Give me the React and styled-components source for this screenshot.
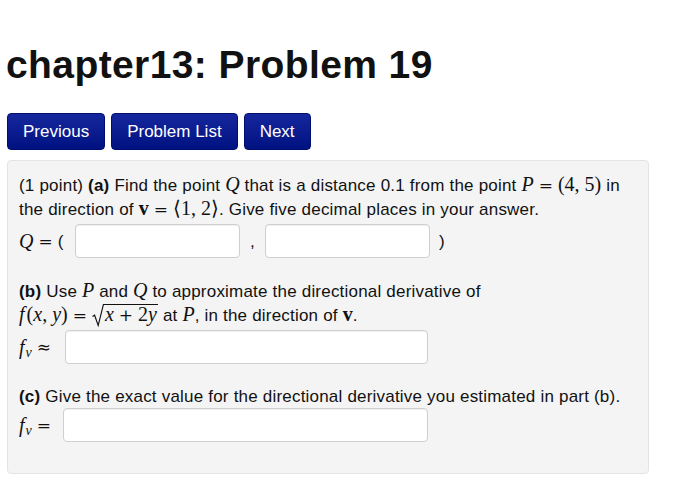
import React from 'react'
import styled, { createGlobalStyle } from 'styled-components'

const GlobalStyle = createGlobalStyle`
  body {
    margin: 0;
    background: #fff;
    font-family: "Liberation Sans", Arial, sans-serif;
    color: #111;
  }
`;

const Page = styled.div`
  padding: 42px 7px 0 7px;
`;

const Title = styled.h1`
  margin: 0 0 26px -1px;
  font-size: 39px;
  line-height: 45px;
  font-weight: bold;
  letter-spacing: 0.4px;
`;

const Nav = styled.div`
  display: flex;
  gap: 6px;
  margin-bottom: 10px;
`;

const NavButton = styled.button`
  height: 37px;
  padding: 0 15px;
  border: 1px solid #000f6e;
  border-radius: 4px;
  background: linear-gradient(#16279e, #001281);
  color: #fff;
  font-family: "Liberation Sans", Arial, sans-serif;
  font-size: 17px;
  cursor: pointer;
`;

const Panel = styled.div`
  width: 642px;
  box-sizing: border-box;
  padding: 12px 11px 31px 11px;
  background: #f4f4f4;
  border: 1px solid #e4e4e4;
  border-radius: 4px;
  font-size: 17px;
  line-height: 23px;
  letter-spacing: 0.2px;
`;

const Part = styled.div`
  margin-bottom: ${(p) => (p.last ? 0 : '21px')};
`;

const AnswerRow = styled.div`
  display: flex;
  align-items: center;
  margin-top: ${(p) => (p.tight ? 0 : '3px')};
`;

const Label = styled.span`
  width: ${(p) => p.width}px;
  flex: none;
  display: inline-flex;
  align-items: center;
  white-space: nowrap;
`;

const Input = styled.input`
  width: ${(p) => p.width}px;
  height: 34px;
  box-sizing: border-box;
  border: 1px solid #cfcfcf;
  border-radius: 4px;
  background: #fff;
  box-shadow: inset 0 1px 1px rgba(0, 0, 0, 0.06);
  padding: 4px 6px;
  font-size: 16px;
  flex: none;
`;

const Sep = styled.span`
  width: 25px;
  text-align: center;
  flex: none;
`;

const Close = styled.span`
  margin-left: 9px;
`;

const M = styled.span`
  font-family: "Liberation Serif", "Times New Roman", serif;
  font-size: 20px;
  letter-spacing: 0;
  font-style: ${(p) => (p.i ? 'italic' : 'normal')};
  font-weight: ${(p) => (p.b ? 'bold' : 'normal')};
  margin-right: ${(p) => (p.gap ? p.gap : 0)}px;
`;

const Op = styled.span`
  font-family: "DejaVu Serif", serif;
  font-size: 17px;
  line-height: 1;
  letter-spacing: 0;
  margin: 0 5px;
`;

const Sub = styled.sub`
  font-size: 14px;
  font-style: italic;
  vertical-align: -3px;
  line-height: 0;
  margin-left: 1px;
`;

const Radical = styled.span`
  position: relative;
  display: inline-block;
  padding-left: 12px;
  line-height: 18px;
  svg {
    position: absolute;
    left: 0;
    top: 0;
  }
`;

const Radicand = styled.span`
  display: inline-block;
  border-top: 1px solid #111;
  padding: 0 1px;
`;

const Fv = () => (
  <M i>f<Sub>v</Sub></M>
);

const Sqrt = ({ children }) => (
  <Radical>
    <svg width="13" height="23" viewBox="0 0 13 23">
      <path d="M0.5 12.5 L2.6 11.2 L6.2 21.5 L11.4 0.5 L13 0.5" fill="none" stroke="#111" strokeWidth="1.1" />
    </svg>
    <Radicand>{children}</Radicand>
  </Radical>
);

export default function App() {
  return (
    <Page>
      <GlobalStyle />
      <Title>chapter13: Problem 19</Title>
      <Nav>
        <NavButton>Previous</NavButton>
        <NavButton>Problem List</NavButton>
        <NavButton>Next</NavButton>
      </Nav>
      <Panel>
        <Part>
          (1 point) <b>(a)</b> Find the point <M i>Q</M> that is a distance 0.1 from the point{' '}
          <M i>P</M><Op>=</Op><M>(4, 5)</M> in
          <br />
          the direction of <M b>v</M><Op>=</Op><M>⟨1, 2⟩</M>. Give five decimal places in your answer.
          <AnswerRow>
            <Label width={56}>
              <M i>Q</M><Op>=</Op>(
            </Label>
            <Input width={165} />
            <Sep>,</Sep>
            <Input width={165} />
            <Close>)</Close>
          </AnswerRow>
        </Part>
        <Part>
          <b>(b)</b> Use <M i>P</M> and <M i>Q</M> to approximate the directional derivative of
          <br />
          <M i gap={2}>f</M><M>(</M><M i>x</M><M>, </M><M i>y</M><M>)</M><Op>=</Op>
          <Sqrt>
            <M i>x</M><Op>+</Op><M>2</M><M i>y</M>
          </Sqrt>{' '}
          at <M i>P</M>, in the direction of <M b>v</M>.
          <AnswerRow>
            <Label width={46}>
              <Fv /><Op>≈</Op>
            </Label>
            <Input width={363} />
          </AnswerRow>
        </Part>
        <Part last>
          <b>(c)</b> Give the exact value for the directional derivative you estimated in part (b).
          <AnswerRow tight>
            <Label width={44}>
              <Fv /><Op>=</Op>
            </Label>
            <Input width={365} />
          </AnswerRow>
        </Part>
      </Panel>
    </Page>
  )
}
